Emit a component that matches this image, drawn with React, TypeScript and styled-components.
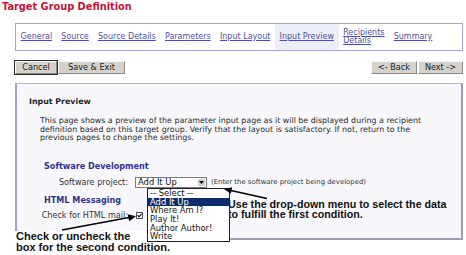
import React from "react";
import styled, { createGlobalStyle } from "styled-components";

const Global = createGlobalStyle`
  html, body { margin: 0; padding: 0; background: #fff; }
  body {
    font-family: "DejaVu Sans", Verdana, sans-serif;
    color: #222;
    width: 466px;
    height: 255px;
    overflow: hidden;
  }
`;

const Page = styled.div`
  position: relative;
  width: 466px;
  height: 255px;
  overflow: hidden;
`;

const Title = styled.h1`
  margin: 0;
  padding: 1px 0 0 2px;
  height: 23px;
  box-sizing: border-box;
  font: bold 9.8px/12px "DejaVu Sans", Verdana, sans-serif;
  color: #c4123c;
`;

const Content = styled.div`
  margin-left: 15px;
  width: 448px;
`;

const Nav = styled.nav`
  display: flex;
  align-items: stretch;
  height: 28px;
  box-sizing: border-box;
  border: 1px solid #a6a6d2;
  background: #fff;
  padding-left: 0;
`;

const NavItem = styled.a<{ $active?: boolean }>`
  display: flex;
  align-items: center;
  padding: 0 4.6px;
  background: ${(p) => (p.$active ? "#edeff8" : "transparent")};
  color: #50509c;
  text-decoration: underline;
  font-size: 8px;
  line-height: 8.2px;
  white-space: nowrap;
`;

const ButtonRow = styled.div`
  display: flex;
  justify-content: space-between;
  margin-top: 10px;
`;

const ButtonGroup = styled.div`
  display: flex;
  gap: 1px;
`;

const Button = styled.button<{ $w: number; $default?: boolean }>`
  width: ${(p) => p.$w}px;
  height: 13px;
  padding: 0;
  box-sizing: border-box;
  font: 8.1px/11px "DejaVu Sans", Verdana, sans-serif;
  color: #1a1a1a;
  background: #d5d2cc;
  border: 1px solid;
  border-color: #f6f6f6 #8a8a8a #8a8a8a #f6f6f6;
  box-shadow: ${(p) => (p.$default ? "0 0 0 1px #2a2a2a" : "none")};
`;

const Panel = styled.section`
  margin-top: 9px;
  height: 157px;
  box-sizing: border-box;
  background: #f8f8fc;
  border-style: solid;
  border-color: #b4b4dc #9c9cb4 #9c9cb4 #a2a2d2;
  border-width: 1px 2px 2px 2px;
  padding: 13px 0 0 12px;
`;

const Heading = styled.h2`
  margin: 0;
  font: bold 7.9px/10px "DejaVu Sans", Verdana, sans-serif;
  color: #1e1e1e;
`;

const Para = styled.p`
  margin: 10px 0 0 11px;
  font: 7.9px/8.5px "DejaVu Sans", Verdana, sans-serif;
  color: #2a2a2a;
  white-space: nowrap;
`;

const Section = styled.h3<{ $top: number }>`
  margin: ${(p) => p.$top}px 0 0 15px;
  font: bold 8.1px/10px "DejaVu Sans", Verdana, sans-serif;
  color: #34348a;
`;

const FormRow = styled.div<{ $top: number }>`
  display: grid;
  grid-template-columns: 99px auto;
  column-gap: 7px;
  align-items: center;
  height: 11px;
  margin-top: ${(p) => p.$top}px;
`;

const Label = styled.span`
  text-align: right;
  font: 8.1px/11px "DejaVu Sans", Verdana, sans-serif;
  color: #333;
  white-space: nowrap;
`;

const Field = styled.div`
  display: flex;
  align-items: center;
  gap: 4px;
`;

const SelectBox = styled.div`
  position: relative;
  width: 72px;
  height: 11px;
  box-sizing: border-box;
  background: #fff;
  border: 1px solid #7a7a7a;
  font: 8.4px/9px "DejaVu Sans", Verdana, sans-serif;
  color: #111;
  padding-left: 2px;
  display: flex;
  align-items: center;
`;

const SelectArrow = styled.span`
  position: absolute;
  right: 1px;
  top: 1px;
  width: 7px;
  height: 7px;
  background: #d4d0c8;
  display: flex;
  align-items: center;
  justify-content: center;
`;

const Hint = styled.span`
  font: 6.9px/11px "DejaVu Sans", Verdana, sans-serif;
  color: #333;
  white-space: nowrap;
`;

const CheckBox = styled.span`
  width: 7px;
  height: 7px;
  box-sizing: border-box;
  border: 1px solid #555;
  background: #fff;
  display: flex;
  align-items: center;
  justify-content: center;
  margin-left: 1px;
`;

const DropList = styled.ul`
  position: absolute;
  left: 147px;
  top: 188px;
  width: 83px;
  margin: 0;
  padding: 0;
  list-style: none;
  box-sizing: border-box;
  background: #fff;
  border: 1px solid #222;
`;

const DropItem = styled.li<{ $selected?: boolean }>`
  height: 8.7px;
  padding-left: 2px;
  font: 8.4px/8.7px "DejaVu Sans", Verdana, sans-serif;
  color: ${(p) => (p.$selected ? "#fff" : "#111")};
  background: ${(p) => (p.$selected ? "#0c2a6e" : "transparent")};
  white-space: nowrap;
`;

const Callout = styled.div<{ $left: number; $top: number; $size: number; $lh: number; $bg?: boolean }>`
  position: absolute;
  left: ${(p) => p.$left}px;
  top: ${(p) => p.$top}px;
  padding: 0 2px 0 1px;
  background: ${(p) => (p.$bg ? "#fff" : "transparent")};
  font-family: "Liberation Sans", Arial, sans-serif;
  font-weight: bold;
  font-size: ${(p) => p.$size}px;
  line-height: ${(p) => p.$lh}px;
  color: #111;
  white-space: nowrap;
`;

const Overlay = styled.svg`
  position: absolute;
  left: 0;
  top: 0;
  pointer-events: none;
`;

const navItems = [
  "General",
  "Source",
  "Source Details",
  "Parameters",
  "Input Layout",
  "Input Preview",
  "Recipients|Details",
  "Summary",
];

const options = ["-- Select --", "Add It Up", "Where Am I?", "Play It!", "Author Author!", "Write"];

export default function App() {
  return (
    <Page>
      <Global />
      <Title>Target Group Definition</Title>
      <Content>
        <Nav>
          {navItems.map((n) => (
            <NavItem key={n} href="#" $active={n === "Input Preview"}>
              {n.includes("|") ? (
                <span>
                  {n.split("|")[0]}
                  <br />
                  {n.split("|")[1]}
                </span>
              ) : (
                n
              )}
            </NavItem>
          ))}
        </Nav>
        <ButtonRow>
          <ButtonGroup>
            <Button $w={42} $default>
              Cancel
            </Button>
            <Button $w={67}>Save &amp; Exit</Button>
          </ButtonGroup>
          <ButtonGroup>
            <Button $w={46}>&lt;- Back</Button>
            <Button $w={45}>Next -&gt;</Button>
          </ButtonGroup>
        </ButtonRow>
        <Panel>
          <Heading>Input Preview</Heading>
          <Para>
            This page shows a preview of the parameter input page as it will be displayed during a recipient
            <br />
            definition based on this target group. Verify that the layout is satisfactory. If not, return to the
            <br />
            previous pages to change the settings.
          </Para>
          <Section $top={18}>Software Development</Section>
          <FormRow $top={6}>
            <Label>Software project:</Label>
            <Field>
              <SelectBox>
                Add It Up
                <SelectArrow>
                  <svg width="5" height="3" viewBox="0 0 5 3">
                    <path d="M0 0H5L2.5 3Z" fill="#000" />
                  </svg>
                </SelectArrow>
              </SelectBox>
              <Hint>(Enter the software project being developed)</Hint>
            </Field>
          </FormRow>
          <Section $top={7}>HTML Messaging</Section>
          <FormRow $top={5}>
            <Label>Check for HTML mail:</Label>
            <Field>
              <CheckBox>
                <svg width="5" height="5" viewBox="0 0 5 5">
                  <path d="M0.5 2.2L2 3.8L4.6 0.8" stroke="#111" strokeWidth="1.2" fill="none" />
                </svg>
              </CheckBox>
            </Field>
          </FormRow>
        </Panel>
      </Content>

      <Callout $left={15} $top={230.5} $size={11} $lh={11.5} $bg>
        Check or uncheck the
        <br />
        box for the second condition.
      </Callout>
      <Callout $left={227} $top={198.5} $size={10.7} $lh={10.7}>
        Use the drop-down menu to select the data
        <br />
        to fulfill the first condition.
      </Callout>

      <DropList>
        {options.map((o) => (
          <DropItem key={o} $selected={o === "Add It Up"}>
            {o}
          </DropItem>
        ))}
      </DropList>

      <Overlay width="466" height="255" viewBox="0 0 466 255">
        <line x1="62" y1="230" x2="129" y2="217.5" stroke="#000" strokeWidth="1.6" />
        <path d="M136 216.2L127.6 214.2L129.2 221.2Z" fill="#000" />
        <line x1="267" y1="198.5" x2="231" y2="190.5" stroke="#000" strokeWidth="1.6" />
        <path d="M224 189L232.2 187.2L230.8 193.8Z" fill="#000" />
      </Overlay>
    </Page>
  );
}
